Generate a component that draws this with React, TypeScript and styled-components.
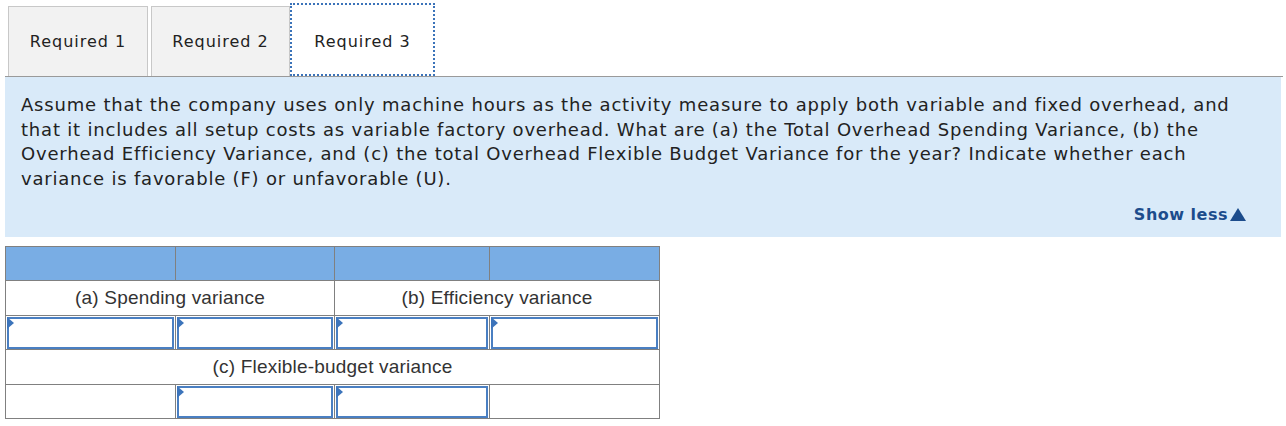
import React from 'react';
import styled, { createGlobalStyle } from 'styled-components';

const GlobalStyle = createGlobalStyle`
  body {
    margin: 0;
    background: #fff;
  }
`;

const Page = styled.div`
  padding: 3px 3px 0 5px;
  width: 1278px;
`;

const TabBar = styled.div`
  display: flex;
  align-items: flex-end;
  padding-left: 3px;
  height: 73px;
  border-bottom: 1px solid #9a9a9a;
`;

const Tab = styled.div<{ $active?: boolean; $w: number; $gap: number }>`
  box-sizing: border-box;
  width: ${p => p.$w}px;
  margin-right: ${p => p.$gap}px;
  height: ${p => (p.$active ? 73 : 70)}px;
  display: flex;
  align-items: center;
  justify-content: center;
  background: ${p => (p.$active ? '#fff' : '#f2f2f2')};
  border: ${p => (p.$active ? '2px dotted #3b73b9' : '1px solid #c8c8c8')};
  border-bottom: ${p => (p.$active ? '2px dotted #3b73b9' : 'none')};
  font-family: "DejaVu Sans", Verdana, sans-serif;
  font-size: 16px;
  letter-spacing: 1px;
  color: #222;
  padding-top: ${p => (p.$active ? 3 : 0)}px;
`;

const Prompt = styled.div`
  background: #d9eaf9;
  margin-right: 2px;
  padding: 16px 16px 11px 16px;
  font-family: "DejaVu Sans", Verdana, sans-serif;
`;

const PromptText = styled.p`
  margin: 0;
  font-size: 18px;
  letter-spacing: 0.8px;
  line-height: 24.5px;
  white-space: nowrap;
  color: #222;
`;

const ToggleRow = styled.div`
  display: flex;
  justify-content: flex-end;
  align-items: center;
  gap: 2px;
  padding: 13px 19px 0 0;
`;

const Toggle = styled.span`
  font-size: 16px;
  font-weight: bold;
  letter-spacing: 0.5px;
  color: #1c4c8c;
  line-height: 22px;
`;

const Arrow = styled.span`
  display: inline-block;
  width: 0;
  height: 0;
  border-left: 8px solid transparent;
  border-right: 8px solid transparent;
  border-bottom: 13px solid #1c4c8c;
  margin-bottom: 2px;
`;

const Grid = styled.table`
  margin-top: 9px;
  border-collapse: collapse;
  border: 1px solid #808080;
  table-layout: fixed;
  width: 654px;
  font-family: "Liberation Sans", Arial, sans-serif;
`;

const HeadCell = styled.td`
  background: #79ade4;
  border: 1px solid #808080;
  height: 33px;
  padding: 0;
`;

const LabelCell = styled.td`
  border: 1px solid #808080;
  height: 34px;
  padding: 0;
  text-align: center;
  font-size: 19px;
  letter-spacing: 0.2px;
  color: #333;
`;

const Cell = styled.td`
  border: 1px solid #808080;
  height: 33px;
  padding: 0;
`;

const Entry = styled.div`
  position: relative;
  box-sizing: border-box;
  height: 32px;
  margin: 0 1px;
  border: 2px solid #4a7fc2;
  background: #fff;

  &::before {
    content: '';
    position: absolute;
    left: -2px;
    top: -2px;
    border-left: 7px solid #3c74bb;
    border-top: 6px solid transparent;
    border-bottom: 6px solid transparent;
  }
`;

const widths = [170, 159, 155, 170];

export default function App(): React.ReactElement {
  return (
    <Page>
      <GlobalStyle />
      <TabBar>
        <Tab $w={140} $gap={3}>Required 1</Tab>
        <Tab $w={139} $gap={0}>Required 2</Tab>
        <Tab $active $w={145} $gap={0}>Required 3</Tab>
      </TabBar>
      <Prompt>
        <PromptText>
          Assume that the company uses only machine hours as the activity measure to apply both variable and fixed overhead, and<br />
          that it includes all setup costs as variable factory overhead. What are (a) the Total Overhead Spending Variance, (b) the<br />
          Overhead Efficiency Variance, and (c) the total Overhead Flexible Budget Variance for the year? Indicate whether each<br />
          variance is favorable (F) or unfavorable (U).
        </PromptText>
        <ToggleRow>
          <Toggle>Show less</Toggle>
          <Arrow />
        </ToggleRow>
      </Prompt>
      <Grid>
        <colgroup>
          {widths.map((w, i) => <col key={i} style={{ width: w }} />)}
        </colgroup>
        <tbody>
          <tr>
            <HeadCell />
            <HeadCell />
            <HeadCell />
            <HeadCell />
          </tr>
          <tr>
            <LabelCell colSpan={2}>(a) Spending variance</LabelCell>
            <LabelCell colSpan={2}>(b) Efficiency variance</LabelCell>
          </tr>
          <tr>
            <Cell><Entry /></Cell>
            <Cell><Entry /></Cell>
            <Cell><Entry /></Cell>
            <Cell><Entry /></Cell>
          </tr>
          <tr>
            <LabelCell colSpan={4}>(c) Flexible-budget variance</LabelCell>
          </tr>
          <tr>
            <Cell />
            <Cell><Entry /></Cell>
            <Cell><Entry /></Cell>
            <Cell />
          </tr>
        </tbody>
      </Grid>
    </Page>
  );
}
